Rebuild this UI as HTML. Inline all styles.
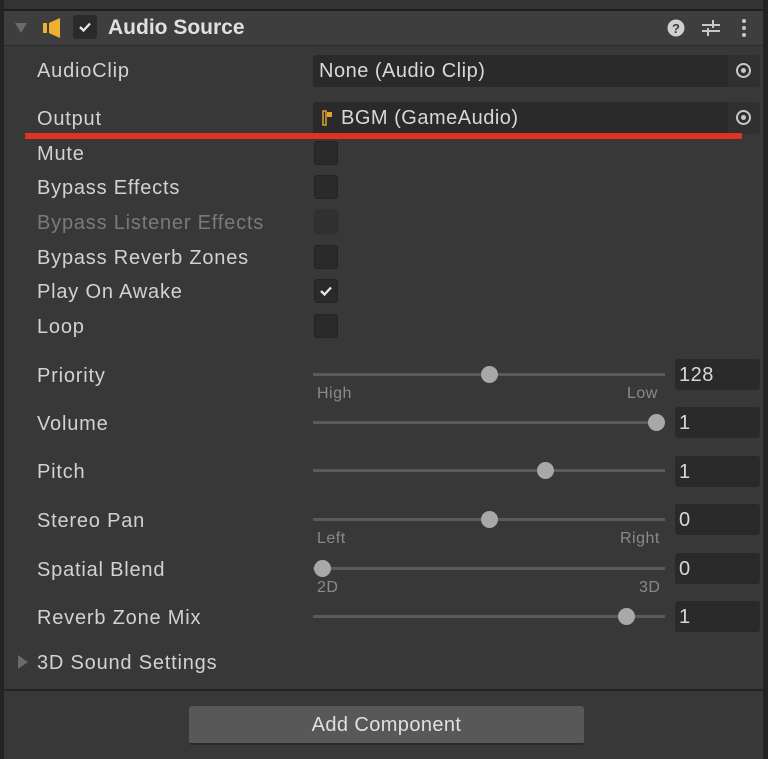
<!DOCTYPE html>
<html><head><style>
*{margin:0;padding:0;box-sizing:border-box}
body{width:768px;height:759px;background:#383838;font-family:"Liberation Sans",sans-serif;color:#d2d2d2;position:relative;overflow:hidden}
.a{position:absolute}
.lbl{position:absolute;left:37px;font-size:20px;line-height:24px;letter-spacing:0.8px;margin-top:1px}
.cb{position:absolute;left:314px;width:24px;height:24px;background:#2a2a2a;border:1px solid #232323;border-radius:3px}
.fld{position:absolute;left:313px;width:447px;height:32px;background:#2a2a2a;border-radius:3px;font-size:20px;line-height:33px;padding-left:6px;color:#d8d8d8;letter-spacing:0.5px}
.tgt{position:absolute;right:0;top:0;width:32px;height:32px;background:#303030;border-radius:0 3px 3px 0}
.tgt:after{content:"";position:absolute;left:8px;top:8px;width:11px;height:11px;border:2px solid #c8c8c8;border-radius:50%}
.tgt:before{content:"";position:absolute;left:13px;top:13px;width:5px;height:5px;background:#c8c8c8;border-radius:50%}
.trk{position:absolute;left:313px;width:352px;height:3px;background:#5a5a5a}
.th{position:absolute;width:17px;height:17px;border-radius:50%;background:#a8a8a8}
.num{position:absolute;left:675px;width:85px;height:31px;background:#2a2a2a;border-radius:3px;font-size:20px;line-height:32px;padding-left:4px;color:#d8d8d8;letter-spacing:0.5px}
.sub{position:absolute;font-size:16px;color:#8a8a8a;letter-spacing:0.5px;margin-top:1px}
</style></head><body>
<div class="a" style="left:0;top:0;width:768px;height:10px;background:#333"></div>
<div class="a" style="left:0;top:9px;width:768px;height:2px;background:#1e1e1e"></div>
<div class="a" style="left:0;top:0;width:4px;height:759px;background:#232323"></div>
<div class="a" style="left:763px;top:0;width:5px;height:759px;background:#232323"></div>
<div class="a" style="left:4px;top:11px;width:759px;height:35px;background:#3e3e3e"></div>
<div class="a" style="left:4px;top:45px;width:759px;height:1px;background:#2c2c2c"></div>
<svg class="a" style="left:14px;top:22px" width="14" height="12"><polygon points="1,1 13,1 7,11" fill="#6a6a6a"/></svg>
<svg class="a" style="left:42px;top:17px" width="22" height="22"><rect x="1" y="6" width="4" height="10" fill="#f0b030"/><polygon points="7,6 18,1 18,21 7,16" fill="#f0b030"/></svg>
<div class="a" style="left:73px;top:15px;width:24px;height:24px;background:#2a2a2a;border-radius:3px"></div>
<svg class="a" style="left:73px;top:15px" width="24" height="24"><path d="M7 12 L10.5 15.5 L17 8.5" stroke="#e8e8e8" stroke-width="2.3" fill="none"/></svg>
<div class="a" style="left:108px;top:16px;font-size:21px;font-weight:bold;color:#e0e0e0">Audio Source</div>
<svg class="a" style="left:666px;top:18px" width="20" height="20"><circle cx="10" cy="10" r="8.5" fill="#d0d0d0"/><text x="10" y="15" font-size="13" font-weight="bold" text-anchor="middle" fill="#3e3e3e" font-family="Liberation Sans">?</text></svg>
<svg class="a" style="left:700px;top:18px" width="22" height="20"><path d="M2 7 H20 M2 13 H20" stroke="#c8c8c8" stroke-width="2"/><path d="M13 2 V10 M8 10 V18" stroke="#c8c8c8" stroke-width="2"/></svg>
<svg class="a" style="left:740px;top:18px" width="8" height="20"><circle cx="4" cy="3" r="2" fill="#c8c8c8"/><circle cx="4" cy="10" r="2" fill="#c8c8c8"/><circle cx="4" cy="17" r="2" fill="#c8c8c8"/></svg>

<div class="lbl" style="top:58px">AudioClip</div>
<div class="fld" style="top:55px">None (Audio Clip)<div class="tgt"></div></div>
<div class="lbl" style="top:106px">Output</div>
<div class="fld" style="top:102px;padding-left:28px"><svg class="a" style="left:9px;top:8px" width="12" height="16"><rect x="1" y="1" width="3" height="14" fill="none" stroke="#e0a030" stroke-width="1.5"/><rect x="5" y="2" width="5" height="5" fill="#e0a030"/></svg>BGM (GameAudio)<div class="tgt"></div></div>
<div class="a" style="left:25px;top:133px;width:717px;height:6px;background:#e0321e"></div>

<div class="lbl" style="top:141px">Mute</div><div class="cb" style="top:141px"></div>
<div class="lbl" style="top:175px">Bypass Effects</div><div class="cb" style="top:175px"></div>
<div class="lbl" style="top:210px;color:#7a7a7a">Bypass Listener Effects</div><div class="cb" style="top:210px;background:#313131;border-color:#2d2d2d"></div>
<div class="lbl" style="top:245px">Bypass Reverb Zones</div><div class="cb" style="top:245px"></div>
<div class="lbl" style="top:279px">Play On Awake</div><div class="cb" style="top:279px"></div>
<svg class="a" style="left:314px;top:279px" width="24" height="24"><path d="M7 12 L10.5 15.5 L17 8.5" stroke="#e8e8e8" stroke-width="2.3" fill="none"/></svg>
<div class="lbl" style="top:314px">Loop</div><div class="cb" style="top:314px"></div>

<div class="lbl" style="top:363px">Priority</div>
<div class="trk" style="top:373px"></div><div class="th" style="left:481px;top:366px"></div>
<div class="num" style="top:359px">128</div>
<div class="sub" style="left:317px;top:384px">High</div><div class="sub" style="left:627px;top:384px">Low</div>

<div class="lbl" style="top:411px">Volume</div>
<div class="trk" style="top:421px"></div><div class="th" style="left:648px;top:414px"></div>
<div class="num" style="top:407px">1</div>

<div class="lbl" style="top:459px">Pitch</div>
<div class="trk" style="top:469px"></div><div class="th" style="left:537px;top:462px"></div>
<div class="num" style="top:456px">1</div>

<div class="lbl" style="top:508px">Stereo Pan</div>
<div class="trk" style="top:518px"></div><div class="th" style="left:481px;top:511px"></div>
<div class="num" style="top:504px">0</div>
<div class="sub" style="left:317px;top:529px">Left</div><div class="sub" style="left:620px;top:529px">Right</div>

<div class="lbl" style="top:557px">Spatial Blend</div>
<div class="trk" style="top:567px"></div><div class="th" style="left:314px;top:560px"></div>
<div class="num" style="top:553px">0</div>
<div class="sub" style="left:317px;top:578px">2D</div><div class="sub" style="left:639px;top:578px">3D</div>

<div class="lbl" style="top:605px">Reverb Zone Mix</div>
<div class="trk" style="top:615px"></div><div class="th" style="left:618px;top:608px"></div>
<div class="num" style="top:601px">1</div>

<svg class="a" style="left:17px;top:654px" width="12" height="16"><polygon points="1,1 11,8 1,15" fill="#6a6a6a"/></svg>
<div class="lbl" style="top:650px">3D Sound Settings</div>
<div class="a" style="left:4px;top:689px;width:759px;height:2px;background:#232323"></div>
<div class="a" style="left:189px;top:706px;width:395px;height:39px;background:#585858;border-radius:3px;border-bottom:2px solid #2a2a2a;text-align:center;font-size:20px;line-height:39px;color:#e0e0e0;letter-spacing:0.4px">Add Component</div>
</body></html>
